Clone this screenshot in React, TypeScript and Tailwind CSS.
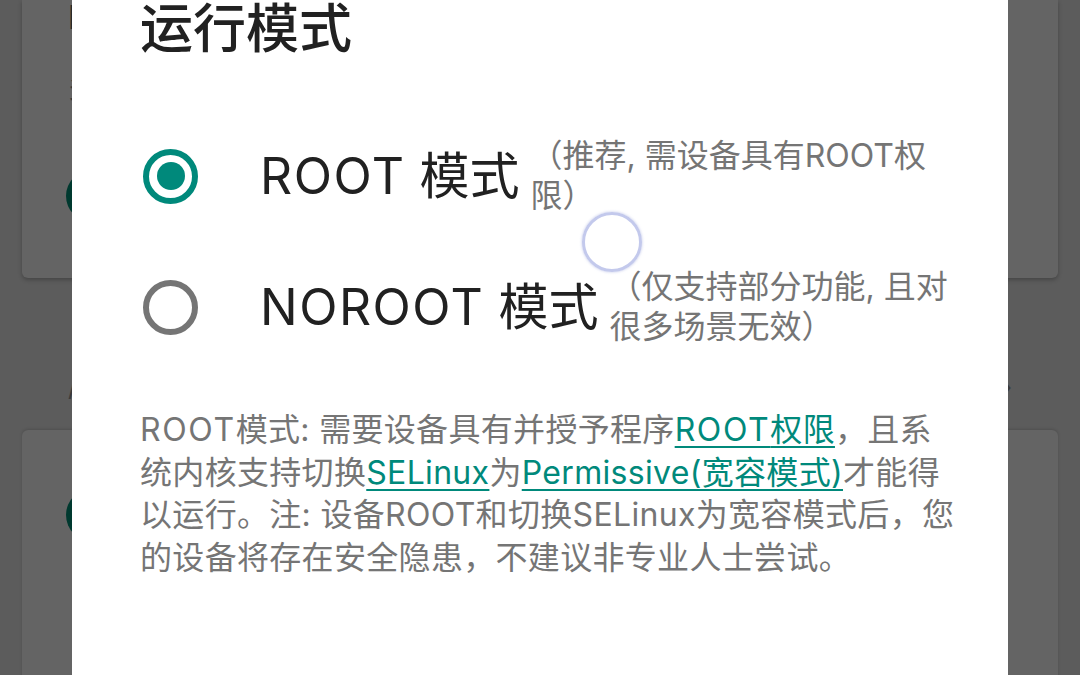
import React from 'react';

const TEAL = 'text-[#00897b]';

function Radio({ checked }: { checked: boolean }) {
  return (
    <span
      className={`ml-[3px] flex h-[55px] w-[55px] shrink-0 items-center justify-center rounded-full border-[6px] ${
        checked ? 'border-[#00897b]' : 'border-[#757575]'
      }`}
    >
      {checked && <span className="h-[28px] w-[28px] rounded-full bg-[#00897b]" />}
    </span>
  );
}

// Latin caps in the source font are wider than Inter's
function Caps({ children }: { children: React.ReactNode }) {
  return <span className="tracking-[0.05em]">{children}</span>;
}

function ModeRow({
  checked,
  latin,
  hint,
}: {
  checked: boolean;
  latin: string;
  hint: [string, string];
}) {
  return (
    <div className="flex h-[100px] items-center">
      <Radio checked={checked} />
      <span className="ml-[62px] whitespace-nowrap text-[50px] leading-none text-[#212121]">
        <span className="tracking-[0.03em]">{latin}</span> 模式
      </span>
      <span className="ml-[11px] whitespace-nowrap text-[32px] leading-[40px] text-[#757575]">
        {hint[0]}
        <br />
        {hint[1]}
      </span>
    </div>
  );
}

function Link({ children }: { children: React.ReactNode }) {
  return (
    <span className={`${TEAL} underline decoration-2 underline-offset-[5px]`}>{children}</span>
  );
}

export default function App() {
  return (
    <div className="relative h-[675px] w-[1080px] overflow-hidden bg-[#5c5c5c] font-['Inter','Noto_Sans_CJK_SC',sans-serif]">
      {/* dimmed page behind the dialog */}
      <div className="flex flex-col px-[22px]">
        <div className="flex h-[278px] flex-col rounded-b-md bg-[#646464] pl-[46px] pt-[2px] shadow-[0_2px_4px_rgba(0,0,0,0.25)]">
          <div className="text-[32px] leading-[32px] font-medium text-[#2a2a2a]">I</div>
          <div className="mt-[38px] text-[28px] leading-[32px] text-[#3a3a3a]">多</div>
          <div className="mt-[66px] h-[52px] w-[52px] -translate-x-[2px] rounded-full bg-[#00392f]" />
        </div>
        <div className="flex h-[152px] items-start justify-between pl-[46px] pr-[46px] pt-[89px]">
          <span className="text-[26px] leading-[40px] text-[#3a3a3a]">/</span>
          <span className="text-[26px] leading-[40px] text-[#3a3a3a]">›</span>
        </div>
        <div className="flex h-[300px] flex-col rounded-t-md bg-[#646464] pl-[44px] shadow-[0_-1px_3px_rgba(0,0,0,0.15)]">
          <div className="mt-[58px] h-[54px] w-[54px] rounded-full bg-[#00392f]" />
        </div>
      </div>

      {/* dialog */}
      <div className="absolute inset-y-0 left-[72px] w-[936px] bg-white pl-[68px] pr-[40px]">
        <h2 className="mt-[3px] text-[53px] leading-[52px] font-medium text-[#212121]">运行模式</h2>
        <div className="mt-[71px] flex flex-col gap-[31px]">
          <ModeRow checked latin="ROOT" hint={['（推荐, 需设备具有ROOT权', '限）']} />
          <ModeRow checked={false} latin="NOROOT" hint={['（仅支持部分功能, 且对', '很多场景无效）']} />
        </div>
        <p className="mt-[52px] whitespace-nowrap text-[32px] leading-[42.5px] tracking-[0.01em] text-[#757575]">
          <Caps>ROOT</Caps>模式: 需要设备具有并授予程序<Link><Caps>ROOT</Caps>权限</Link>，且系
          <br />
          统内核支持切换<Link>SELinux</Link>为<Link>Permissive(宽容模式)</Link>才能得
          <br />
          以运行。注: 设备ROOT和切换SELinux为宽容模式后，您
          <br />
          的设备将存在安全隐患，不建议非专业人士尝试。
        </p>
      </div>

      {/* touch indicator */}
      <div className="absolute left-[582px] top-[212px] h-[60px] w-[60px] rounded-full border-[3px] border-[#c3c9ec] shadow-[0_0_3px_rgba(150,160,220,0.6)]" />
    </div>
  );
}
